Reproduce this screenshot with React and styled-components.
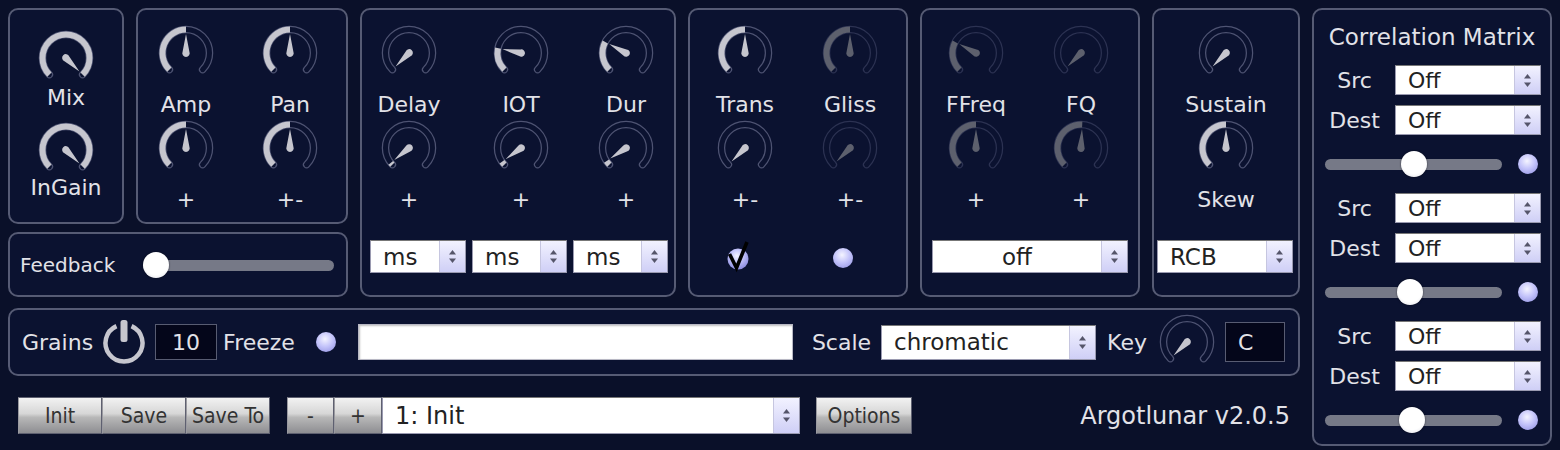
import React from "react";
import styled, { createGlobalStyle } from "styled-components";

const C = {
  bg: "#0a1029",
  panel: "#0b1230",
  border: "#565b74",
  text: "#e2e2e8",
  val: "#c6c6ce",
  track: "#4e5372",
  dimVal: "#5d606d",
  dimTrack: "#2c3252",
};

const GlobalStyle = createGlobalStyle`
  html, body {
    margin: 0;
    padding: 0;
    background: ${C.bg};
  }
  body {
    font-family: "DejaVu Sans", Verdana, sans-serif;
    color: ${C.text};
  }
`;

const Page = styled.div`
  display: flex;
  gap: 12px;
  padding: 8px;
  width: 1560px;
  height: 450px;
  box-sizing: border-box;
  background: ${C.bg};
`;

const LeftSide = styled.div`
  width: 1292px;
  display: flex;
  flex-direction: column;
`;

const TopRow = styled.div`
  display: flex;
  gap: 12px;
  height: 289px;
`;

const Stack = styled.div`
  display: flex;
  flex-direction: column;
  gap: 8px;
  width: 340px;
`;

const PairRow = styled.div`
  display: flex;
  gap: 12px;
  height: 216px;
`;

const Panel = styled.div`
  box-sizing: border-box;
  width: ${(p) => p.$w}px;
  height: ${(p) => p.$h}px;
  border: 2px solid ${C.border};
  border-radius: 10px;
  background: ${C.panel};
  padding-top: ${(p) => p.$pt || 0}px;
  display: flex;
  flex-direction: column;
`;

const Columns = styled.div`
  display: grid;
  grid-template-columns: ${(p) => p.$cols};
  justify-items: center;
  align-items: center;
  width: ${(p) => (p.$full ? "100%" : "auto")};
`;

const Col = styled.div`
  display: flex;
  flex-direction: column;
  align-items: center;
`;

const Label = styled.div`
  box-sizing: border-box;
  height: ${(p) => p.$h}px;
  padding-top: ${(p) => p.$pt || 0}px;
  line-height: ${(p) => p.$lh || 26}px;
  font-size: ${(p) => p.$size || 22}px;
  white-space: nowrap;
  text-align: center;
`;

const ControlRow = styled.div`
  display: flex;
  align-items: center;
  gap: ${(p) => p.$gap || 0}px;
  margin-top: 18px;
  padding-left: ${(p) => p.$pl || 0}px;
  height: 33px;
`;

/* ---------- knob ---------- */

const rad = (a) => (a * Math.PI) / 180;
const arcPath = (cx, cy, r, a0, a1) => {
  const x0 = cx + r * Math.sin(rad(a0));
  const y0 = cy - r * Math.cos(rad(a0));
  const x1 = cx + r * Math.sin(rad(a1));
  const y1 = cy - r * Math.cos(rad(a1));
  return `M${x0} ${y0} A${r} ${r} 0 ${a1 - a0 > 180 ? 1 : 0} 1 ${x1} ${y1}`;
};

function Knob({ angle = -135, dim }) {
  const c = 30;
  const r = 23.5;
  const trackC = dim ? C.dimTrack : C.track;
  const valC = dim ? C.dimVal : C.val;
  return (
    <svg width="60" height="60" viewBox="0 0 60 60">
      <path d={arcPath(c, c, r, -135, 135)} stroke={trackC} strokeWidth="7.5" fill="none" strokeLinecap="round" />
      <path d={arcPath(c, c, r, -135, 135)} stroke={C.panel} strokeWidth="5" fill="none" strokeLinecap="round" />
      {angle > -134 && (
        <path d={arcPath(c, c, r, -135, angle)} stroke={valC} strokeWidth="6" fill="none" />
      )}
      <path
        d="M0 -19 L-3.4 -1.2 A3.7 3.7 0 1 0 3.4 -1.2 Z"
        fill={valC}
        transform={`translate(${c} ${c}) rotate(${angle})`}
      />
    </svg>
  );
}

function PowerKnob() {
  return (
    <svg width="46" height="46" viewBox="0 0 46 46">
      <path d={arcPath(23, 24, 18.5, 24, 336)} stroke={C.val} strokeWidth="4.5" fill="none" />
      <rect x="19.5" y="1" width="7" height="22" rx="2.5" fill={C.val} />
    </svg>
  );
}

/* ---------- form bits ---------- */

const SelectBox = styled.div`
  box-sizing: border-box;
  display: flex;
  width: ${(p) => p.$w}px;
  height: ${(p) => p.$h || 33}px;
  background: #ffffff;
  border: 1px solid #9a9ab0;
  border-top-color: #777;
  color: #222;
  font-size: ${(p) => p.$size || 23}px;
`;

const SelectText = styled.div`
  flex: 1;
  display: flex;
  align-items: center;
  justify-content: ${(p) => (p.$center ? "center" : "flex-start")};
  padding-left: ${(p) => (p.$center ? 0 : 12)}px;
  white-space: nowrap;
  overflow: hidden;
`;

const Spin = styled.div`
  width: 25px;
  background: linear-gradient(#f2f2ff, #cfcff6);
  border-left: 1px solid #c6c6e0;
  display: flex;
  align-items: center;
  justify-content: center;
`;

function Select({ value, w, h, center, size }) {
  return (
    <SelectBox $w={w} $h={h} $size={size}>
      <SelectText $center={center}>{value}</SelectText>
      <Spin>
        <svg width="9" height="15" viewBox="0 0 9 15">
          <path d="M4.5 1 L8 5.5 L1 5.5 Z" fill="#55556a" />
          <path d="M4.5 14 L8 9.5 L1 9.5 Z" fill="#55556a" />
        </svg>
      </Spin>
    </SelectBox>
  );
}

const Led = styled.div`
  width: 20px;
  height: 20px;
  border-radius: 50%;
  flex: none;
  margin-left: ${(p) => p.$ml || 0}px;
  margin-top: ${(p) => p.$mt || 0}px;
  background: radial-gradient(circle at 45% 35%, #f4f4ff 0%, #c4c4fa 45%, #8c8ce0 100%);
`;

function CheckLed() {
  return (
    <svg width="30" height="34" viewBox="0 0 30 34">
      <defs>
        <radialGradient id="ck" cx="45%" cy="35%" r="65%">
          <stop offset="0%" stopColor="#f4f4ff" />
          <stop offset="45%" stopColor="#c4c4fa" />
          <stop offset="100%" stopColor="#8c8ce0" />
        </radialGradient>
      </defs>
      <circle cx="12" cy="19" r="10.5" fill="url(#ck)" />
      <path d="M3.5 14 L10.5 28 L21 2" stroke="#000" strokeWidth="3.6" fill="none" strokeLinejoin="miter" />
    </svg>
  );
}

const SliderWrap = styled.div`
  position: relative;
  width: ${(p) => p.$w}px;
  height: 26px;
  flex: none;
  margin-left: ${(p) => p.$ml || 0}px;
`;

const SliderTrack = styled.div`
  position: absolute;
  left: 0;
  right: 0;
  top: 8px;
  height: 11px;
  border-radius: 6px;
  background: #767987;
`;

const SliderThumb = styled.div`
  position: absolute;
  top: 0;
  width: 26px;
  height: 26px;
  border-radius: 50%;
  background: radial-gradient(circle at 50% 40%, #ffffff 60%, #dcdce4 100%);
  box-shadow: 0 0 2px rgba(0, 0, 0, 0.6);
`;

function Slider({ w, value, ml }) {
  return (
    <SliderWrap $w={w} $ml={ml}>
      <SliderTrack />
      <SliderThumb style={{ left: `${value * (w - 26)}px` }} />
    </SliderWrap>
  );
}

/* ---------- feedback / grains ---------- */

const InlineRow = styled.div`
  display: flex;
  align-items: center;
  height: 100%;
  padding-left: ${(p) => p.$pl || 0}px;
`;

const Text = styled.span`
  font-size: ${(p) => p.$size || 22}px;
  margin-left: ${(p) => p.$ml || 0}px;
  white-space: nowrap;
`;

const NumBox = styled.div`
  box-sizing: border-box;
  width: ${(p) => p.$w}px;
  height: ${(p) => p.$h}px;
  margin-left: ${(p) => p.$ml || 0}px;
  background: #04061a;
  border: 1.5px solid #585c72;
  font-size: 22px;
  display: flex;
  align-items: center;
  justify-content: ${(p) => (p.$left ? "flex-start" : "center")};
  padding-left: ${(p) => (p.$left ? 12 : 0)}px;
  flex: none;
`;

const TextInput = styled.div`
  box-sizing: border-box;
  width: 435px;
  height: 36px;
  margin-left: ${(p) => p.$ml || 0}px;
  background: #fff;
  border: 1px solid #b8b8c4;
  box-shadow: inset 1px 1px 2px rgba(0, 0, 0, 0.25);
  flex: none;
`;

const Spacer = styled.div`
  margin-left: ${(p) => p.$ml || 0}px;
  display: flex;
  flex: none;
`;

/* ---------- bottom bar ---------- */

const BottomBar = styled.div`
  display: flex;
  align-items: center;
  margin-top: 21px;
  padding: 0 10px;
  height: 37px;
`;

const ButtonGroup = styled.div`
  display: flex;
  margin-left: ${(p) => p.$ml || 0}px;
  height: 37px;
`;

const GlossButton = styled.div`
  box-sizing: border-box;
  width: ${(p) => p.$w}px;
  height: 37px;
  display: flex;
  align-items: center;
  justify-content: center;
  background: linear-gradient(#f2f2f2 0%, #d6d6d6 45%, #b8b8b8 55%, #8e8e92 100%);
  border: 1px solid #5e6070;
  border-left-color: #9a9aa0;
  color: #333;
  font-family: "DejaVu Sans Condensed", "Liberation Sans Narrow", "DejaVu Sans", sans-serif;
  font-stretch: condensed;
  font-size: ${(p) => p.$size || 21}px;
  white-space: nowrap;
`;

const Version = styled.div`
  margin-left: auto;
  font-size: 24px;
  white-space: nowrap;
`;

/* ---------- correlation matrix ---------- */

const MatrixTitle = styled.div`
  height: 55px;
  line-height: 55px;
  text-align: center;
  font-size: 23px;
  white-space: nowrap;
`;

const MatrixGroup = styled.div`
  display: flex;
  flex-direction: column;
  gap: 10px;
`;

const MatrixRow = styled.div`
  display: grid;
  grid-template-columns: 81px 146px;
  align-items: center;
  height: 30px;
`;

const MatrixLabel = styled.div`
  text-align: center;
  font-size: 22px;
`;

const MatrixSlider = styled.div`
  display: flex;
  align-items: center;
  height: 58px;
  margin-top: -10px;
  padding-left: 11px;
`;

/* ---------- data ---------- */

function KnobCol({ top, bottom, label, sub }) {
  return (
    <Col>
      <Knob {...top} />
      <Label $h={35} $pt={9}>{label}</Label>
      <Knob {...bottom} />
      <Label $h={44} $lh={44}>{sub}</Label>
    </Col>
  );
}

const matrix = [0.5, 0.48, 0.49];

export default function App() {
  return (
    <>
      <GlobalStyle />
      <Page>
        <LeftSide>
          <TopRow>
            <Stack>
              <PairRow>
                <Panel $w={116} $h={216} $pt={18}>
                  <Col>
                    <Knob angle={135} />
                    <Label $h={32} $lh={20}>Mix</Label>
                    <Knob angle={135} />
                    <Label $h={16} $lh={16}>InGain</Label>
                  </Col>
                </Panel>
                <Panel $w={212} $h={216} $pt={13}>
                  <Columns $cols="96px 112px">
                    <KnobCol top={{ angle: 0 }} bottom={{ angle: 0 }} label="Amp" sub="+" />
                    <KnobCol top={{ angle: 0 }} bottom={{ angle: 0 }} label="Pan" sub="+-" />
                  </Columns>
                </Panel>
              </PairRow>
              <Panel $w={340} $h={65}>
                <InlineRow $pl={10}>
                  <Text $size={20}>Feedback</Text>
                  <Slider w={191} value={0} ml={28} />
                </InlineRow>
              </Panel>
            </Stack>

            <Panel $w={316} $h={289} $pt={13}>
              <Columns $cols="94px 130px 80px">
                <KnobCol top={{ angle: -135 }} bottom={{ angle: -129 }} label="Delay" sub="+" />
                <KnobCol top={{ angle: -78 }} bottom={{ angle: -126 }} label="IOT" sub="+" />
                <KnobCol top={{ angle: -62 }} bottom={{ angle: -124 }} label="Dur" sub="+" />
              </Columns>
              <ControlRow $pl={8} $gap={6}>
                <Select value="ms" w={96} />
                <Select value="ms" w={95} />
                <Select value="ms" w={95} />
              </ControlRow>
            </Panel>

            <Panel $w={220} $h={289} $pt={13}>
              <Columns $cols="110px 100px">
                <KnobCol top={{ angle: 0 }} bottom={{ angle: -135 }} label="Trans" sub="+-" />
                <KnobCol top={{ angle: 0, dim: true }} bottom={{ angle: -135, dim: true }} label="Gliss" sub="+-" />
              </Columns>
              <ControlRow>
                <Columns $cols="102px 102px" $full>
                  <CheckLed />
                  <Led $mt={3} />
                </Columns>
              </ControlRow>
            </Panel>

            <Panel $w={220} $h={289} $pt={13}>
              <Columns $cols="108px 102px">
                <KnobCol top={{ angle: -62, dim: true }} bottom={{ angle: 0, dim: true }} label="FFreq" sub="+" />
                <KnobCol top={{ angle: -135, dim: true }} bottom={{ angle: 3, dim: true }} label="FQ" sub="+" />
              </Columns>
              <ControlRow $pl={10}>
                <Select value="off" w={196} center />
              </ControlRow>
            </Panel>

            <Panel $w={148} $h={289} $pt={13}>
              <Columns $cols="144px">
                <KnobCol top={{ angle: -135 }} bottom={{ angle: 0 }} label="Sustain" sub="Skew" />
              </Columns>
              <ControlRow $pl={3}>
                <Select value="RCB" w={136} />
              </ControlRow>
            </Panel>
          </TopRow>

          <Panel $w={1292} $h={68} style={{ marginTop: 11 }}>
            <InlineRow $pl={12}>
              <Text>Grains</Text>
              <Spacer $ml={8}>
                <PowerKnob />
              </Spacer>
              <NumBox $w={62} $h={36} $ml={8}>10</NumBox>
              <Text $ml={6}>Freeze</Text>
              <Led $ml={21} />
              <TextInput $ml={22} />
              <Text $ml={19}>Scale</Text>
              <Spacer $ml={10}>
                <Select value="chromatic" w={215} h={35} />
              </Spacer>
              <Text $ml={11}>Key</Text>
              <Spacer $ml={10}>
                <Knob angle={-135} />
              </Spacer>
              <NumBox $w={60} $h={40} $ml={8} $left>C</NumBox>
            </InlineRow>
          </Panel>

          <BottomBar>
            <ButtonGroup>
              <GlossButton $w={84}>Init</GlossButton>
              <GlossButton $w={84}>Save</GlossButton>
              <GlossButton $w={84}>Save To</GlossButton>
            </ButtonGroup>
            <ButtonGroup $ml={17}>
              <GlossButton $w={47}>-</GlossButton>
              <GlossButton $w={48}>+</GlossButton>
              <Select value="1: Init" w={418} h={37} size={24} />
            </ButtonGroup>
            <ButtonGroup $ml={16}>
              <GlossButton $w={96}>Options</GlossButton>
            </ButtonGroup>
            <Version>Argotlunar v2.0.5</Version>
          </BottomBar>
        </LeftSide>

        <Panel $w={240} $h={438}>
          <MatrixTitle>Correlation Matrix</MatrixTitle>
          {matrix.map((v, i) => (
            <MatrixGroup key={i}>
              <MatrixRow>
                <MatrixLabel>Src</MatrixLabel>
                <Select value="Off" w={146} h={30} size={22} />
              </MatrixRow>
              <MatrixRow>
                <MatrixLabel>Dest</MatrixLabel>
                <Select value="Off" w={146} h={30} size={22} />
              </MatrixRow>
              <MatrixSlider>
                <Slider w={177} value={v} />
                <Led $ml={16} />
              </MatrixSlider>
            </MatrixGroup>
          ))}
        </Panel>
      </Page>
    </>
  );
}
